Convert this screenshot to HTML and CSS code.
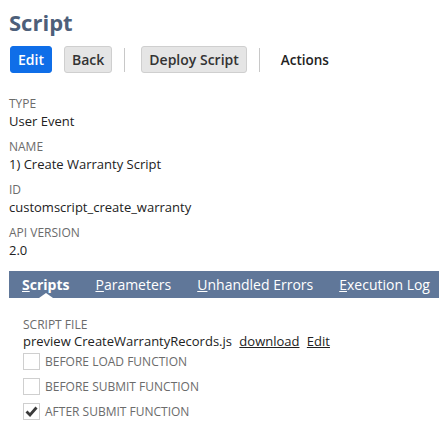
FILE: index.html
```html
<!DOCTYPE html>
<html lang="en">
<head>
    <meta charset="UTF-8">
    <title>Script</title>
    <link rel="stylesheet" href="styles.css">
</head>
<body>
    <div class="page">
        <h1 class="page-title">Script</h1>

        <div class="toolbar">
            <button class="btn btn-primary">Edit</button>
            <button class="btn">Back</button>
            <span class="sep"></span>
            <button class="btn">Deploy Script</button>
            <span class="sep"></span>
            <span class="actions">Actions</span>
        </div>

        <div class="fields">
            <div class="field">
                <div class="field-label">Type</div>
                <div class="field-value">User Event</div>
            </div>
            <div class="field">
                <div class="field-label">Name</div>
                <div class="field-value">1) Create Warranty Script</div>
            </div>
            <div class="field">
                <div class="field-label">ID</div>
                <div class="field-value">customscript_create_warranty</div>
            </div>
            <div class="field">
                <div class="field-label">API Version</div>
                <div class="field-value">2.0</div>
            </div>
        </div>

        <div class="tabs">
            <span class="tab active"><u>S</u>cripts</span>
            <span class="tab"><u>P</u>arameters</span>
            <span class="tab"><u>U</u>nhandled Errors</span>
            <span class="tab"><u>E</u>xecution Log</span>
        </div>

        <div class="tab-body">
            <div class="field-label">Script File</div>
            <div class="file-line">
                preview CreateWarrantyRecords.js
                <a href="#">download</a>
                <a href="#">Edit</a>
            </div>

            <label class="check-row">
                <span class="box"></span>
                <span class="check-text">Before Load Function</span>
            </label>
            <label class="check-row">
                <span class="box"></span>
                <span class="check-text">Before Submit Function</span>
            </label>
            <label class="check-row">
                <span class="box checked">
                    <svg width="13" height="11" viewBox="0 0 13 11"><path d="M1.5 5.5 L5 9 L11.5 1.5" fill="none" stroke="#3a3a3a" stroke-width="2.8"/></svg>
                </span>
                <span class="check-text">After Submit Function</span>
            </label>
        </div>
    </div>
</body>
</html>
```

FILE: styles.css
```css
* {
    margin: 0;
    padding: 0;
    box-sizing: border-box;
}

body {
    font-family: "Open Sans", "Liberation Sans", sans-serif;
    font-size: 13px;
    color: #222;
    background: #fff;
    overflow: hidden;
}

.page {
    padding: 7px 0 0 9px;
}

.page-title {
    font-size: 22px;
    font-weight: 700;
    color: #4d5f7a;
    line-height: 30px;
}

.toolbar {
    display: flex;
    align-items: center;
    margin-top: 9px;
    height: 27px;
}

.btn {
    font-family: inherit;
    font-size: 14px;
    font-weight: 600;
    color: #333;
    background: #e5e5e5;
    border: 1px solid #cfcfcf;
    border-radius: 3px;
    height: 27px;
    padding: 0 7px;
    margin-left: 1px;
    margin-right: 11px;
}

.btn-primary {
    background: #0f6ee8;
    border-color: #0f6ee8;
    color: #fff;
}

.sep {
    width: 1px;
    height: 24px;
    background: #c8c8c8;
    margin: 0 15px 0 1px;
}

.actions {
    font-size: 13.5px;
    font-weight: 600;
    color: #222;
    margin-left: 6px;
}

.fields {
    margin-top: 23px;
}

.field {
    margin-bottom: 9px;
}

.field-label {
    font-size: 12px;
    color: #6b6b6b;
    text-transform: uppercase;
    line-height: 16px;
}

.field-value {
    line-height: 18px;
}

.tabs {
    margin-top: 12px;
    background: #607799;
    height: 27px;
    display: flex;
    align-items: center;
}

.tab {
    color: #fff;
    font-size: 14px;
    padding: 0 13px;
    line-height: 27px;
    white-space: nowrap;
    position: relative;
}

.tab.active {
    font-weight: 700;
}

.tab.active::after {
    content: "";
    position: absolute;
    left: 50%;
    bottom: 0;
    margin-left: -7px;
    border-left: 7px solid transparent;
    border-right: 7px solid transparent;
    border-bottom: 5px solid #fff;
}

.tab-body {
    padding: 19px 0 0 14px;
}

.file-line {
    line-height: 16px;
}

.file-line a {
    color: #222;
    margin-left: 4px;
}

.check-row {
    display: flex;
    align-items: center;
    height: 25px;
}

.box {
    width: 17px;
    height: 17px;
    border: 1px solid #cfcfcf;
    background: #fff;
    display: flex;
    align-items: center;
    justify-content: center;
    margin-right: 5px;
}

.check-text {
    font-size: 12px;
    color: #6b6b6b;
    text-transform: uppercase;
}
```
